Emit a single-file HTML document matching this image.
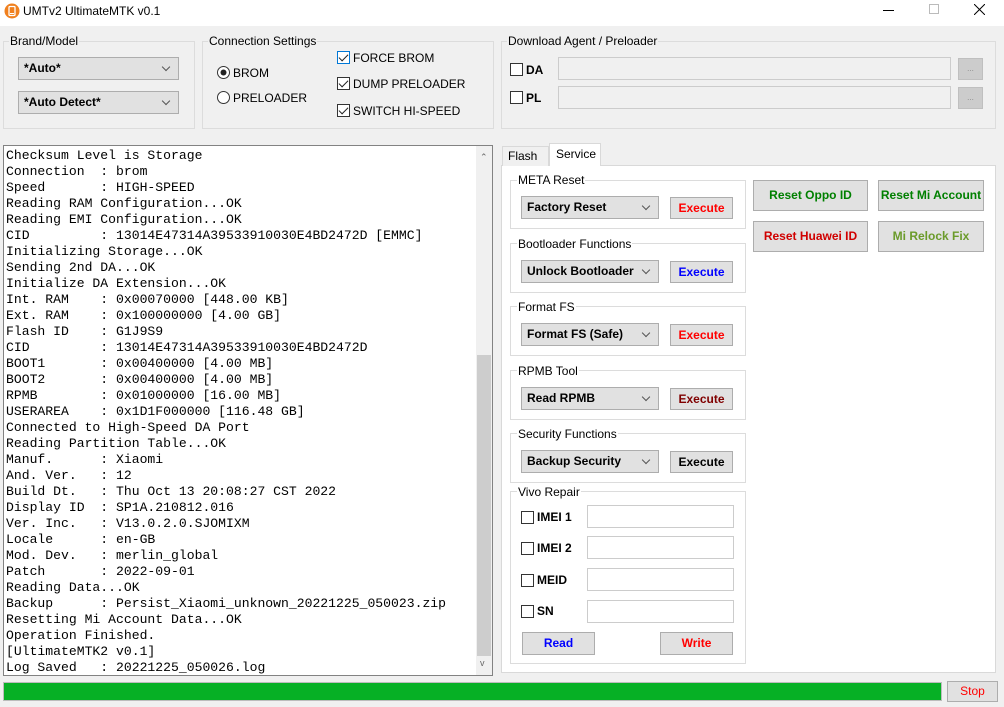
<!DOCTYPE html>
<html><head><meta charset="utf-8"><style>
*{box-sizing:border-box;margin:0;padding:0}
body{width:1004px;height:707px;background:#f0f0f0;font-family:"Liberation Sans",sans-serif;font-size:12px;color:#000;position:relative;overflow:hidden}
.a{position:absolute}
.gb{position:absolute;border:1px solid #dcdcdc}
.gl{position:absolute;background:#f0f0f0;padding:0 1px;font-size:12px;line-height:14px;white-space:nowrap}
.cb{position:absolute;background:#e1e1e1;border:1px solid #adadad;font-weight:bold;font-size:12px;line-height:20px;padding-left:5px;white-space:nowrap}
.cb:after{content:"";position:absolute;right:9px;top:6px;width:5px;height:5px;border-right:1px solid #555;border-bottom:1px solid #555;transform:rotate(45deg)}
.bt{position:absolute;background:#e1e1e1;border:1px solid #adadad;font-weight:bold;text-align:center;font-size:12px}
.chk{position:absolute;width:13px;height:13px;border:1px solid #333;background:#fff}
.chk.on:after{content:"";position:absolute;left:3px;top:0px;width:4px;height:8px;border-right:1.5px solid #222;border-bottom:1.5px solid #222;transform:rotate(45deg)}
.lbl{position:absolute;white-space:nowrap;line-height:14px}
.fld{position:absolute;background:#fff;border:1px solid #ccc}
.wg{position:absolute;background:#fff}
#log{position:absolute;left:3px;top:145px;width:490px;height:531px;background:#fff;border:1px solid #828282}
#log pre{position:absolute;left:2px;top:2px;font-family:"Liberation Mono",monospace;font-size:13.1px;line-height:16px;color:#000}
</style></head><body>
<div class="wg" style="left:0;top:0;width:1004px;height:26px"></div>
<svg class="a" style="left:4px;top:3px" width="16" height="16" viewBox="0 0 16 16"><circle cx="8" cy="8" r="7.5" fill="#f0801e"/><rect x="5" y="3.5" width="6" height="9" rx="1" fill="none" stroke="#fff" stroke-width="1.3"/><line x1="6" y1="10.5" x2="10" y2="10.5" stroke="#fff"/></svg>
<div class="lbl" style="left:23px;top:4px;font-size:12px">UMTv2 UltimateMTK v0.1</div>
<div class="a" style="left:883px;top:10px;width:11px;height:1px;background:#000"></div>
<div class="a" style="left:929px;top:4px;width:10px;height:10px;border:1px solid #bbb"></div>
<svg class="a" style="left:974px;top:4px" width="11" height="11"><path d="M0 0L11 11M11 0L0 11" stroke="#000" stroke-width="1"/></svg>

<div class="gb" style="left:3px;top:41px;width:192px;height:88px"></div>
<div class="gl" style="left:9px;top:34px">Brand/Model</div>
<div class="cb" style="left:18px;top:57px;width:161px;height:23px">*Auto*</div>
<div class="cb" style="left:18px;top:91px;width:161px;height:23px">*Auto Detect*</div>

<div class="gb" style="left:202px;top:41px;width:292px;height:88px"></div>
<div class="gl" style="left:208px;top:34px">Connection Settings</div>
<svg class="a" style="left:217px;top:66px" width="13" height="13"><circle cx="6.5" cy="6.5" r="6" fill="#fff" stroke="#333"/><circle cx="6.5" cy="6.5" r="3" fill="#222"/></svg>
<div class="lbl" style="left:233px;top:66px">BROM</div>
<svg class="a" style="left:217px;top:91px" width="13" height="13"><circle cx="6.5" cy="6.5" r="6" fill="#fff" stroke="#333"/></svg>
<div class="lbl" style="left:233px;top:91px">PRELOADER</div>
<div class="chk on" style="left:337px;top:51px;border-color:#0078d7"></div><div class="lbl" style="left:353px;top:51px">FORCE BROM</div>
<div class="chk on" style="left:337px;top:77px"></div><div class="lbl" style="left:353px;top:77px">DUMP PRELOADER</div>
<div class="chk on" style="left:337px;top:104px"></div><div class="lbl" style="left:353px;top:104px">SWITCH HI-SPEED</div>

<div class="gb" style="left:501px;top:41px;width:495px;height:88px"></div>
<div class="gl" style="left:507px;top:34px">Download Agent / Preloader</div>
<div class="chk" style="left:510px;top:63px"></div><div class="lbl" style="left:526px;top:63px;font-weight:bold">DA</div>
<div class="a" style="left:558px;top:57px;width:393px;height:23px;border:1px solid #ccc"></div>
<div class="a" style="left:958px;top:58px;width:25px;height:22px;background:#cccccc;border:1px solid #bfbfbf;font-size:8px;text-align:center;color:#888;line-height:20px">...</div>
<div class="chk" style="left:510px;top:91px"></div><div class="lbl" style="left:526px;top:91px;font-weight:bold">PL</div>
<div class="a" style="left:558px;top:86px;width:393px;height:23px;border:1px solid #ccc"></div>
<div class="a" style="left:958px;top:87px;width:25px;height:22px;background:#cccccc;border:1px solid #bfbfbf;font-size:8px;text-align:center;color:#888;line-height:20px">...</div>

<div id="log"><pre>Checksum Level is Storage
Connection  : brom
Speed       : HIGH-SPEED
Reading RAM Configuration...OK
Reading EMI Configuration...OK
CID         : 13014E47314A39533910030E4BD2472D [EMMC]
Initializing Storage...OK
Sending 2nd DA...OK
Initialize DA Extension...OK
Int. RAM    : 0x00070000 [448.00 KB]
Ext. RAM    : 0x100000000 [4.00 GB]
Flash ID    : G1J9S9
CID         : 13014E47314A39533910030E4BD2472D
BOOT1       : 0x00400000 [4.00 MB]
BOOT2       : 0x00400000 [4.00 MB]
RPMB        : 0x01000000 [16.00 MB]
USERAREA    : 0x1D1F000000 [116.48 GB]
Connected to High-Speed DA Port
Reading Partition Table...OK
Manuf.      : Xiaomi
And. Ver.   : 12
Build Dt.   : Thu Oct 13 20:08:27 CST 2022
Display ID  : SP1A.210812.016
Ver. Inc.   : V13.0.2.0.SJOMIXM
Locale      : en-GB
Mod. Dev.   : merlin_global
Patch       : 2022-09-01
Reading Data...OK
Backup      : Persist_Xiaomi_unknown_20221225_050023.zip
Resetting Mi Account Data...OK
Operation Finished.
[UltimateMTK2 v0.1]
Log Saved   : 20221225_050026.log</pre>
<div class="a" style="left:472px;top:0;width:16px;height:529px;background:#f0f0f0"></div>
<div class="a" style="left:473px;top:209px;width:14px;height:301px;background:#cdcdcd"></div>
<div class="a" style="left:476px;top:6px;font-size:9px;color:#666">&#8963;</div>
<div class="a" style="left:476px;top:512px;font-size:9px;color:#666">v</div>
</div>

<div class="a" style="left:501px;top:165px;width:495px;height:508px;background:#fff;border:1px solid #d9d9d9"></div>
<div class="a" style="left:502px;top:146px;width:47px;height:20px;border:1px solid #d9d9d9;border-bottom:none;background:#f0f0f0"></div>
<div class="lbl" style="left:508px;top:149px">Flash</div>
<div class="a" style="left:549px;top:143px;width:52px;height:23px;border:1px solid #d9d9d9;border-bottom:none;background:#fff"></div>
<div class="lbl" style="left:556px;top:147px">Service</div>

<div class="gb" style="left:510px;top:180px;width:236px;height:49px"></div><div class="gl" style="left:517px;top:173px;background:#fff">META Reset</div>
<div class="cb" style="left:521px;top:196px;width:138px;height:23px">Factory Reset</div>
<div class="bt" style="left:670px;top:197px;width:63px;height:22px;line-height:20px;color:#ff0000">Execute</div>

<div class="gb" style="left:510px;top:243px;width:236px;height:50px"></div><div class="gl" style="left:517px;top:237px;background:#fff">Bootloader Functions</div>
<div class="cb" style="left:521px;top:260px;width:138px;height:23px">Unlock Bootloader</div>
<div class="bt" style="left:670px;top:261px;width:63px;height:22px;line-height:20px;color:#0000ff">Execute</div>

<div class="gb" style="left:510px;top:306px;width:236px;height:50px"></div><div class="gl" style="left:517px;top:300px;background:#fff">Format FS</div>
<div class="cb" style="left:521px;top:323px;width:138px;height:23px">Format FS (Safe)</div>
<div class="bt" style="left:670px;top:324px;width:63px;height:22px;line-height:20px;color:#ff0000">Execute</div>

<div class="gb" style="left:510px;top:370px;width:236px;height:50px"></div><div class="gl" style="left:517px;top:364px;background:#fff">RPMB Tool</div>
<div class="cb" style="left:521px;top:387px;width:138px;height:23px">Read RPMB</div>
<div class="bt" style="left:670px;top:388px;width:63px;height:22px;line-height:20px;color:#800000">Execute</div>

<div class="gb" style="left:510px;top:433px;width:236px;height:50px"></div><div class="gl" style="left:517px;top:427px;background:#fff">Security Functions</div>
<div class="cb" style="left:521px;top:450px;width:138px;height:23px">Backup Security</div>
<div class="bt" style="left:670px;top:451px;width:63px;height:22px;line-height:20px;color:#000">Execute</div>

<div class="gb" style="left:510px;top:491px;width:236px;height:173px"></div><div class="gl" style="left:517px;top:485px;background:#fff">Vivo Repair</div>
<div class="chk" style="left:521px;top:511px"></div><div class="lbl" style="left:537px;top:510px;font-weight:bold">IMEI 1</div>
<div class="fld" style="left:587px;top:505px;width:147px;height:23px"></div>
<div class="chk" style="left:521px;top:542px"></div><div class="lbl" style="left:537px;top:541px;font-weight:bold">IMEI 2</div>
<div class="fld" style="left:587px;top:536px;width:147px;height:23px"></div>
<div class="chk" style="left:521px;top:574px"></div><div class="lbl" style="left:537px;top:573px;font-weight:bold">MEID</div>
<div class="fld" style="left:587px;top:568px;width:147px;height:23px"></div>
<div class="chk" style="left:521px;top:605px"></div><div class="lbl" style="left:537px;top:604px;font-weight:bold">SN</div>
<div class="fld" style="left:587px;top:600px;width:147px;height:23px"></div>
<div class="bt" style="left:522px;top:632px;width:73px;height:23px;line-height:21px;color:#0000ff">Read</div>
<div class="bt" style="left:660px;top:632px;width:73px;height:23px;line-height:21px;color:#ff0000">Write</div>

<div class="bt" style="left:753px;top:180px;width:115px;height:31px;line-height:29px;color:#008000">Reset Oppo ID</div>
<div class="bt" style="left:878px;top:180px;width:106px;height:31px;line-height:29px;color:#008000">Reset Mi Account</div>
<div class="bt" style="left:753px;top:221px;width:115px;height:31px;line-height:29px;color:#d00000">Reset Huawei ID</div>
<div class="bt" style="left:878px;top:221px;width:106px;height:31px;line-height:29px;color:#6b9b2a">Mi Relock Fix</div>

<div class="a" style="left:3px;top:682px;width:939px;height:19px;background:#e6e6e6;border:1px solid #bcbcbc"><div style="position:absolute;left:0;top:0;right:0;bottom:0;background:#06b025"></div></div>
<div class="bt" style="left:947px;top:681px;width:51px;height:21px;line-height:19px;color:#ff0000;font-weight:normal">Stop</div>
</body></html>
